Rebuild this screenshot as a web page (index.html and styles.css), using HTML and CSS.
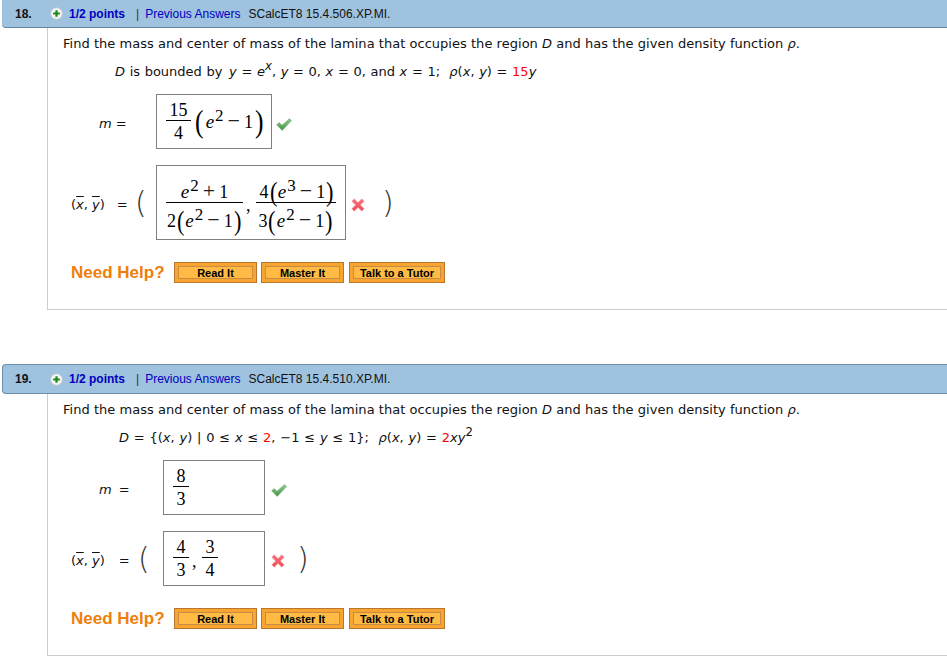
FILE: index.html
```html
<!DOCTYPE html>
<html lang="en">
<head>
    <meta charset="UTF-8">
    <title>Assignment</title>
    <link rel="stylesheet" href="styles.css">
</head>
<body>

<svg class="defs" width="0" height="0" aria-hidden="true">
  <defs>
    <linearGradient id="okfill" x1="0" y1="0" x2="0" y2="1">
      <stop offset="0" stop-color="#93cb8f"/>
      <stop offset="1" stop-color="#3f9440"/>
    </linearGradient>
    <linearGradient id="nofill" x1="0" y1="0" x2="0" y2="1">
      <stop offset="0" stop-color="#f8747c"/>
      <stop offset="1" stop-color="#ec4a55"/>
    </linearGradient>
    <symbol id="plus" viewBox="0 0 14 14">
      <circle cx="7" cy="7" r="6.2" fill="#f6f6f6" stroke="#c3ccd3"/>
      <path d="M7 3.4v7.2M3.4 7h7.2" stroke="#1b8a1b" stroke-width="2.4"/>
    </symbol>
    <symbol id="check" viewBox="0 0 16 13">
      <path d="M.6 6.8 3.2 4.6 6 7.2 13.4.6 15.6 2.6 6.2 12.4z" fill="url(#okfill)" stroke="#76a878" stroke-width=".5"/>
    </symbol>
    <symbol id="cross" viewBox="0 0 14 14">
      <path d="M.8 3.2 3.2.8 7 4.6 10.8.8 13.2 3.2 9.4 7 13.2 10.8 10.8 13.2 7 9.4 3.2 13.2.8 10.8 4.6 7z" fill="url(#nofill)" stroke="#f5a5a8" stroke-width=".6"/>
    </symbol>
  </defs>
</svg>

<section class="question first">
  <header class="q-head">
    <span class="q-num">18.</span>
    <svg class="plus"><use href="#plus"/></svg>
    <a class="q-points">1/2 points</a>
    <span class="q-sep">|</span>
    <a class="q-prev">Previous Answers</a>
    <span class="q-code">SCalcET8 15.4.506.XP.MI.</span>
  </header>
  <div class="q-body">
    <p class="q-text">Find the mass and center of mass of the lamina that occupies the region <i>D</i> and has the given density function <i>ρ</i>.</p>
    <p class="q-given given-18"><i>D</i> is bounded by<span class="gap"></span> <i>y</i> = <i>e<sup>x</sup></i>, <i>y</i> = 0, <i>x</i> = 0, and <i>x</i> = 1;&nbsp; <i>ρ</i>(<i>x</i>, <i>y</i>) = <span class="red">15</span><i>y</i></p>

    <div class="answer row-m18">
      <span class="a-label label-m"><i>m</i> =</span>
      <div class="a-box box-m18 math">
        <span class="frac"><span>15</span><span>4</span></span>
        <span class="expr"><span class="par">(</span><i>e</i><sup>2</sup><span class="minus">−</span>1<span class="par">)</span></span>
      </div>
      <svg class="check"><use href="#check"/></svg>
    </div>

    <div class="answer row-c18">
      <span class="a-label label-c">(<span class="bar"><i>x</i></span>, <span class="bar"><i>y</i></span>)<span class="eq">=</span></span>
      <span class="big-par open">(</span>
      <div class="a-box box-c18 math">
        <span class="frac wide wide-l">
          <span><i>e</i><sup>2</sup><span class="minus">+</span>1</span>
          <span>2<span class="par">(</span><i>e</i><sup>2</sup><span class="minus">−</span>1<span class="par">)</span></span>
        </span>
        <span class="comma">,</span>
        <span class="frac wide wide-r">
          <span>4<span class="par">(</span><i>e</i><sup>3</sup><span class="minus">−</span>1<span class="par">)</span></span>
          <span>3<span class="par">(</span><i>e</i><sup>2</sup><span class="minus">−</span>1<span class="par">)</span></span>
        </span>
      </div>
      <svg class="cross"><use href="#cross"/></svg>
      <span class="big-par close-18">)</span>
    </div>

    <div class="help help-18">
      <span class="help-label">Need Help?</span>
      <a class="btn btn-read">Read It</a>
      <a class="btn btn-master">Master It</a>
      <a class="btn btn-tutor">Talk to a Tutor</a>
    </div>
  </div>
</section>

<section class="question second">
  <header class="q-head">
    <span class="q-num">19.</span>
    <svg class="plus"><use href="#plus"/></svg>
    <a class="q-points">1/2 points</a>
    <span class="q-sep">|</span>
    <a class="q-prev">Previous Answers</a>
    <span class="q-code">SCalcET8 15.4.510.XP.MI.</span>
  </header>
  <div class="q-body">
    <p class="q-text">Find the mass and center of mass of the lamina that occupies the region <i>D</i> and has the given density function <i>ρ</i>.</p>
    <p class="q-given given-19"><i>D</i> = {(<i>x</i>, <i>y</i>) | 0 ≤ <i>x</i> ≤ <span class="red">2</span>, −1 ≤ <i>y</i> ≤ 1};&nbsp; <i>ρ</i>(<i>x</i>, <i>y</i>) = <span class="red">2</span><i>xy</i><sup>2</sup></p>

    <div class="answer row-m19">
      <span class="a-label label-m19"><i>m</i> =</span>
      <div class="a-box box-m19 math">
        <span class="frac"><span>8</span><span>3</span></span>
      </div>
      <svg class="check"><use href="#check"/></svg>
    </div>

    <div class="answer row-c19">
      <span class="a-label label-c19">(<span class="bar"><i>x</i></span>, <span class="bar"><i>y</i></span>)<span class="eq">=</span></span>
      <span class="big-par open">(</span>
      <div class="a-box box-c19 math">
        <span class="frac"><span>4</span><span>3</span></span>
        <span class="comma">,</span>
        <span class="frac"><span>3</span><span>4</span></span>
      </div>
      <svg class="cross"><use href="#cross"/></svg>
      <span class="big-par close-19">)</span>
    </div>

    <div class="help help-19">
      <span class="help-label">Need Help?</span>
      <a class="btn btn-read">Read It</a>
      <a class="btn btn-master">Master It</a>
      <a class="btn btn-tutor">Talk to a Tutor</a>
    </div>
  </div>
</section>

</body>
</html>
```

FILE: styles.css
```css
* {
  box-sizing: border-box;
}

body {
  margin: 0;
  background: #fff;
  color: #111;
  font-family: "DejaVu Sans", Verdana, sans-serif;
  font-size: 13px;
  overflow: hidden;
}

.defs {
  position: absolute;
}

.red {
  color: #f00;
}

sup {
  font-size: 0.9em;
  line-height: 0;
  vertical-align: 0.48em;
}

/* question header bar */

.question {
  margin-left: 2px;
}

.second {
  margin-top: 54px;
}

.q-head {
  display: flex;
  align-items: center;
  height: 28px;
  padding-left: 13px;
  background: #9fc2df;
  border-bottom: 1px solid #5f83a3;
  border-bottom-left-radius: 4px;
  font-family: "Liberation Sans", Arial, sans-serif;
  font-size: 12px;
}

.second .q-head {
  height: 30px;
  border: 1px solid #6c8eab;
  border-right: 0;
  border-radius: 4px 0 0 4px;
  padding-left: 12px;
}

.q-num {
  width: 35px;
  font-weight: bold;
}

.plus {
  width: 13px;
  height: 13px;
  margin-right: 6px;
}

.q-points {
  color: #0000c0;
  font-weight: bold;
}

.q-sep {
  margin: 0 6px 0 11px;
  color: #333;
}

.q-prev {
  color: #0000c0;
}

.q-code {
  margin-left: 8px;
}

/* question body */

.q-body {
  margin-left: 45px;
  padding-left: 15px;
  border-left: 1px solid #ccc;
  border-bottom: 1px solid #ccc;
}

.first .q-body {
  height: 282px;
}

.second .q-body {
  height: 262px;
}

.q-text {
  margin: 0;
  padding-top: 8px;
  line-height: 16px;
  letter-spacing: 0.03px;
}

.q-given {
  margin: 0;
  line-height: 16px;
  padding-top: 12px;
  word-spacing: 0.65px;
}

.given-18 {
  padding-left: 52px;
  word-spacing: 0.5px;
}

.given-19 {
  padding-left: 56px;
}

.gap {
  display: inline-block;
  width: 2px;
}

/* answer rows */

.answer {
  display: flex;
  align-items: center;
}

.row-m18,
.row-m19 {
  margin-top: 14px;
}

.row-c18,
.row-c19 {
  margin-top: 16px;
}

.a-label {
  flex: none;
  margin-top: 4px;
}

.label-m {
  width: 93px;
  padding-left: 36px;
}

.label-m19 {
  width: 100px;
  padding-left: 36px;
  word-spacing: 3px;
}

.label-c {
  width: 75px;
  padding-left: 8px;
}

.label-c19 {
  width: 78px;
  padding-left: 8px;
}

.label-c19 .eq {
  margin-left: 14px;
}

.eq {
  margin-left: 12px;
}

.bar {
  text-decoration: overline;
}

.big-par {
  font-family: "DejaVu Sans", sans-serif;
  font-weight: 200;
  font-size: 30px;
  line-height: 30px;
  color: #333;
}

.open {
  width: 18px;
  margin: 0 3px 0 -3px;
}

.row-c19 .open {
  width: 22px;
}

.close-18 {
  margin-left: 17px;
}

.close-19 {
  margin-left: 12px;
}

.a-box {
  display: flex;
  align-items: center;
  flex: none;
  border: 1px solid #808080;
  background: #fff;
}

.box-m18 {
  width: 116px;
  height: 55px;
  padding-left: 9px;
}

.box-c18 {
  width: 190px;
  height: 75px;
  padding-left: 9px;
}

.box-m19 {
  width: 102px;
  height: 55px;
  padding-left: 9px;
}

.box-c19 {
  width: 102px;
  height: 55px;
  padding-left: 9px;
}

.math {
  font-family: "Liberation Serif", "Times New Roman", serif;
  font-size: 18px;
  color: #000;
}

.math i {
  font-size: 19px;
}

.math sup {
  margin-left: 1px;
  font-size: 17px;
  vertical-align: 7px;
}

.expr {
  margin-left: 2px;
  white-space: nowrap;
}

.frac {
  display: inline-flex;
  flex-direction: column;
  align-items: center;
  line-height: 20px;
}

.frac > span {
  padding: 2px 3.5px 0;
  white-space: nowrap;
}

.frac > span:first-child {
  width: 100%;
  padding-top: 0;
  text-align: center;
  border-bottom: 1px solid #000;
}

.wide-l {
  width: 77px;
}

.wide-r {
  width: 80px;
}

.wide > span:first-child {
  padding-top: 7px;
}

.wide > span:last-child {
  padding: 8px 0 0;
}

.par {
  display: inline-block;
  margin: 0 1px;
  font-size: 32px;
  line-height: 0;
  vertical-align: -4px;
  transform: scaleX(0.8);
}

.wide .par {
  margin: 0;
  font-size: 28px;
  vertical-align: -3px;
}

.minus {
  margin: 0 4px;
  font-size: 22px;
  line-height: 0;
  color: #222;
}

.comma {
  width: 13px;
  padding-left: 3px;
  margin-top: 6px;
}

.check {
  flex: none;
  width: 16px;
  height: 13px;
  margin: 6px 0 0 4px;
}

.row-m19 .check {
  margin-left: 6px;
}

.cross {
  flex: none;
  width: 14px;
  height: 14px;
  margin: 4px 0 0 5px;
}

.row-c19 .cross {
  margin-left: 6px;
}

/* need help row */

.help {
  display: flex;
  align-items: center;
  padding-left: 8px;
}

.help-18,
.help-19 {
  margin-top: 22px;
}

.help-label {
  width: 103px;
  color: #ee7f0b;
  font-family: "Liberation Sans", Arial, sans-serif;
  font-size: 17px;
  font-weight: bold;
}

.btn {
  display: flex;
  align-items: center;
  justify-content: center;
  height: 21px;
  margin-right: 4px;
  border: 1px solid #b9762c;
  box-shadow: inset 0 0 0 3px #f7a431, inset 0 0 0 4px #c78c46;
  background: #ffbb44;
  color: #000;
  font-family: "Liberation Sans", Arial, sans-serif;
  font-size: 11px;
  font-weight: bold;
}

.btn-read,
.btn-master {
  width: 83px;
}

.btn-tutor {
  width: 96px;
  margin-left: 1px;
}
```
